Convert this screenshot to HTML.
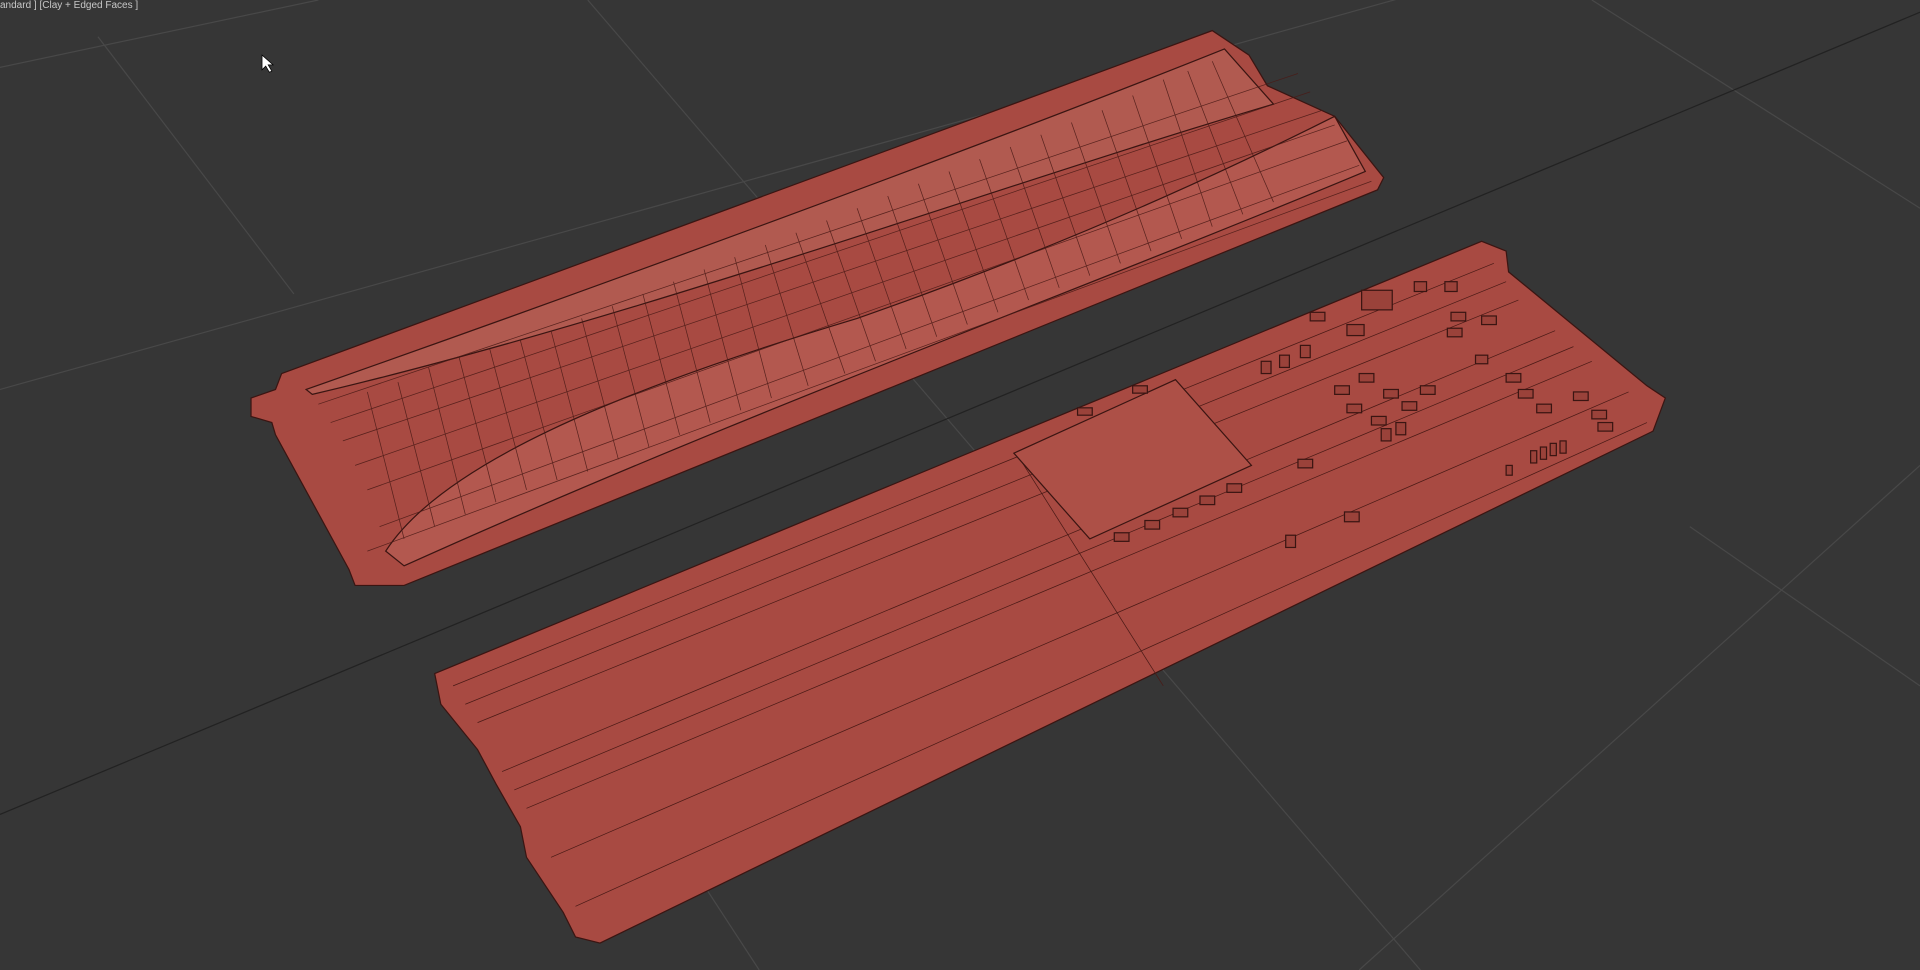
<!DOCTYPE html>
<html><head><meta charset="utf-8"><style>
html,body{margin:0;padding:0;background:#363636;overflow:hidden}
svg{display:block}
.t{position:absolute;left:0;top:0;font:10px "Liberation Sans",sans-serif;color:#c8c8c8}
</style></head><body>
<svg width="1920" height="970" viewBox="0 0 1568 792" preserveAspectRatio="none">
<rect width="1568" height="792" fill="#363636"/>
<g stroke="#484848" stroke-width="1" fill="none">
<line x1="0" y1="55" x2="260" y2="0"/>
<line x1="0" y1="318" x2="1568" y2="-120"/>
<line x1="80" y1="30" x2="240" y2="240"/>
<line x1="480" y1="0" x2="1160" y2="792"/>
<line x1="1300" y1="0" x2="1568" y2="170"/>
<line x1="1380" y1="430" x2="1568" y2="560"/>
<line x1="1568" y1="380" x2="1110" y2="792"/>
<line x1="560" y1="700" x2="620" y2="792"/>
</g>
<line x1="0" y1="665" x2="1568" y2="10" stroke="#222" stroke-width="1"/>
<!-- upper piece -->
<g stroke="#3a1512" stroke-width="1">
<polygon points="230,305 990,25 1020,45 1035,70 1090,95 1130,145 1125,155 330,478 290,478 285,465 225,355 222,345 205,340 205,325 225,318" fill="#a84a42"/>
<path d="M250,318 C500,230 800,120 1000,40 L1040,85 C820,150 520,260 255,322 Z" fill="#b15a50"/>
<path d="M315,450 C360,380 500,320 700,260 C900,190 1040,120 1090,95 L1115,140 C900,230 600,340 330,462 Z" fill="#b3584f"/>
<g stroke="#4a1a16" stroke-width="0.6" fill="none" opacity="0.85">
<path d="M300,320 L330,440"/><path d="M325,312 L355,430"/><path d="M350,300 L380,420"/><path d="M375,292 L405,410"/><path d="M400,285 L430,400"/><path d="M425,278 L455,392"/><path d="M450,270 L480,385"/><path d="M475,260 L505,375"/><path d="M500,250 L530,365"/><path d="M525,240 L555,355"/><path d="M550,230 L580,345"/><path d="M575,220 L605,335"/><path d="M600,210 L630,325"/><path d="M625,200 L660,315"/><path d="M650,190 L690,305"/><path d="M675,180 L715,295"/><path d="M700,170 L740,285"/><path d="M725,160 L765,275"/><path d="M750,150 L790,265"/><path d="M775,140 L815,255"/><path d="M800,130 L840,245"/><path d="M825,120 L865,235"/><path d="M850,110 L890,225"/><path d="M875,100 L915,215"/><path d="M900,90 L940,205"/><path d="M925,78 L965,195"/><path d="M950,65 L990,185"/><path d="M970,58 L1015,175"/><path d="M990,50 L1040,165"/>
<path d="M260,330 L1060,60"/><path d="M270,345 L1070,75"/><path d="M280,360 L1080,90"/><path d="M290,380 L1090,102"/><path d="M300,400 L1100,115"/><path d="M310,430 L1110,135"/><path d="M300,450 L1120,148"/>
</g>
</g>
<!-- lower piece -->
<g stroke="#3a1512" stroke-width="1">
<polygon points="355,550 1210,197 1230,205 1232,222 1345,315 1360,325 1350,352 490,770 470,765 460,745 430,700 425,675 405,640 390,612 360,575" fill="#a84a42"/>
<g stroke="#4a1a16" stroke-width="0.6" fill="none">
<path d="M370,560 L1220,215"/><path d="M380,575 L1230,230"/><path d="M390,590 L1240,245"/><path d="M410,630 L1270,270"/><path d="M420,645 L1285,283"/><path d="M430,660 L1300,295"/><path d="M450,700 L1330,320"/><path d="M470,740 L1345,345"/>
<path d="M830,370 L950,560"/>
</g>
<polygon points="828,370 960,310 1022,380 890,440" fill="#ad5047"/>
<g fill="#9a423a">
<rect x="910" y="435" width="12" height="7"/><rect x="935" y="425" width="12" height="7"/><rect x="958" y="415" width="12" height="7"/><rect x="980" y="405" width="12" height="7"/><rect x="1002" y="395" width="12" height="7"/>
<rect x="1050" y="437" width="8" height="10"/><rect x="1098" y="418" width="12" height="8"/><rect x="1060" y="375" width="12" height="7"/>
<rect x="1030" y="295" width="8" height="10"/><rect x="1045" y="290" width="8" height="10"/><rect x="1062" y="282" width="8" height="10"/>
<rect x="1090" y="315" width="12" height="7"/><rect x="1110" y="305" width="12" height="7"/><rect x="1130" y="318" width="12" height="7"/><rect x="1100" y="330" width="12" height="7"/><rect x="1120" y="340" width="12" height="7"/><rect x="1145" y="328" width="12" height="7"/><rect x="1160" y="315" width="12" height="7"/>
<rect x="1100" y="265" width="14" height="9"/><rect x="1070" y="255" width="12" height="7"/><rect x="1112" y="237" width="25" height="16"/>
<rect x="1155" y="230" width="10" height="8"/><rect x="1180" y="230" width="10" height="8"/><rect x="1185" y="255" width="12" height="7"/><rect x="1210" y="258" width="12" height="7"/><rect x="1182" y="268" width="12" height="7"/>
<rect x="1230" y="305" width="12" height="7"/><rect x="1240" y="318" width="12" height="7"/><rect x="1255" y="330" width="12" height="7"/><rect x="1285" y="320" width="12" height="7"/><rect x="1300" y="335" width="12" height="7"/><rect x="1305" y="345" width="12" height="7"/>
<rect x="1205" y="290" width="10" height="7"/><rect x="1128" y="350" width="8" height="10"/><rect x="1140" y="345" width="8" height="10"/>
<rect x="1250" y="368" width="5" height="10"/><rect x="1258" y="365" width="5" height="10"/><rect x="1266" y="362" width="5" height="10"/><rect x="1274" y="360" width="5" height="10"/><rect x="1230" y="380" width="5" height="8"/>
<rect x="880" y="333" width="12" height="6"/><rect x="925" y="315" width="12" height="6"/>
</g>
</g>
<path d="M214,45 L214,57 L217,54 L220,59 L222,58 L219,53 L223,53 Z" fill="#fff" stroke="#000" stroke-width="0.6"/>
</svg>
<div class="t">andard ] [Clay + Edged Faces ]</div>
</body></html>
